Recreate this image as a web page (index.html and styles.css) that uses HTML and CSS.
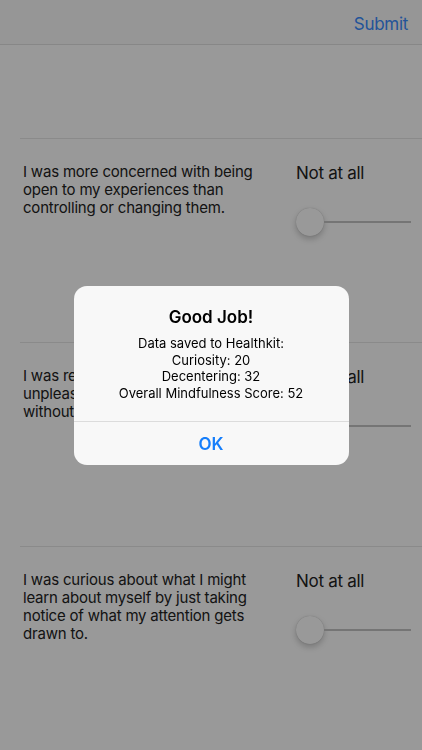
FILE: index.html
```html
<!DOCTYPE html>
<html lang="en">
<head>
<meta charset="utf-8">
<title>Mindfulness</title>
<link rel="stylesheet" href="styles.css">
</head>
<body>
<div class="page">
  <header class="navbar">
    <span class="nav-action">Submit</span>
  </header>
  <div class="spacer"></div>
  <section class="row">
    <p class="question">I was more concerned with being open to my experiences than controlling or changing them.</p>
    <div class="answer">
      <div class="answer-label">Not at all</div>
      <div class="slider"><span class="thumb"></span><span class="track"></span></div>
    </div>
  </section>
  <section class="row">
    <p class="question">I was receptive to observing unpleasant thoughts and feelings without interfering with them.</p>
    <div class="answer">
      <div class="answer-label">Not at all</div>
      <div class="slider"><span class="thumb"></span><span class="track"></span></div>
    </div>
  </section>
  <section class="row">
    <p class="question">I was curious about what I might learn about myself by just taking notice of what my attention gets drawn to.</p>
    <div class="answer">
      <div class="answer-label">Not at all</div>
      <div class="slider"><span class="thumb"></span><span class="track"></span></div>
    </div>
  </section>
</div>
<div class="overlay">
  <div class="alert">
    <div class="alert-body">
      <div class="alert-title">Good Job!</div>
      <div class="alert-message">Data saved to Healthkit:<br>Curiosity: 20<br>Decentering: 32<br>Overall Mindfulness Score: 52</div>
    </div>
    <div class="alert-button">OK</div>
  </div>
</div>
</body>
</html>
```
FILE: styles.css
```css
html, body {
  margin: 0;
  padding: 0;
}
body {
  width: 422px;
  height: 750px;
  overflow: hidden;
  background: #ffffff;
  font-family: Inter, "Liberation Sans", sans-serif;
  color: #222222;
}
.page {
  height: 750px;
  display: flex;
  flex-direction: column;
}
.navbar {
  height: 45px;
  box-sizing: border-box;
  padding-top: 4px;
  background: #fafafa;
  border-bottom: 1px solid #e2e2e2;
  display: flex;
  align-items: center;
  justify-content: flex-end;
  padding-right: 14px;
  flex-shrink: 0;
}
.nav-action {
  font-size: 17px;
  color: #3a8cff;
  letter-spacing: -0.3px;
}
.spacer {
  height: 93px;
  flex-shrink: 0;
}
.row {
  height: 204px;
  flex-shrink: 0;
  margin-left: 20px;
  border-top: 1px solid #e6e6e6;
  display: flex;
  padding-top: 24px;
  box-sizing: border-box;
}
.question {
  margin: 0 0 0 3px;
  width: 236px;
  font-size: 15px;
  line-height: 18px;
  letter-spacing: -0.2px;
}
.answer {
  margin-left: 37px;
  flex: 1;
  padding-right: 11px;
  display: flex;
  flex-direction: column;
  gap: 25px;
}
.answer-label {
  font-size: 17px;
  line-height: 20px;
  letter-spacing: -0.3px;
}
.slider {
  height: 28px;
  display: flex;
  align-items: center;
}
.thumb {
  width: 28px;
  height: 28px;
  border-radius: 50%;
  background: #ffffff;
  box-shadow: 0 3px 6px rgba(0,0,0,0.22), 0 0 1px rgba(0,0,0,0.25);
  flex-shrink: 0;
}
.track {
  flex: 1;
  height: 2px;
  background: #c4c4c4;
}
.overlay {
  position: fixed;
  inset: 0;
  background: rgba(0,0,0,0.4);
  display: flex;
  align-items: center;
  justify-content: center;
}
.alert {
  width: 275px;
  background: #f8f8f8;
  border-radius: 13px;
  overflow: hidden;
  margin-top: 1px;
}
.alert-body {
  padding: 20px 16px 20px;
  text-align: center;
  border-bottom: 1px solid #dcdcdc;
}
.alert-title {
  font-size: 17px;
  line-height: 22px;
  font-weight: 600;
  color: #000;
  margin-bottom: 7px;
}
.alert-message {
  font-size: 13px;
  line-height: 16.5px;
  color: #000;
}
.alert-button {
  height: 43px;
  display: flex;
  align-items: center;
  justify-content: center;
  font-size: 17px;
  font-weight: 600;
  color: #157efb;
}
```
